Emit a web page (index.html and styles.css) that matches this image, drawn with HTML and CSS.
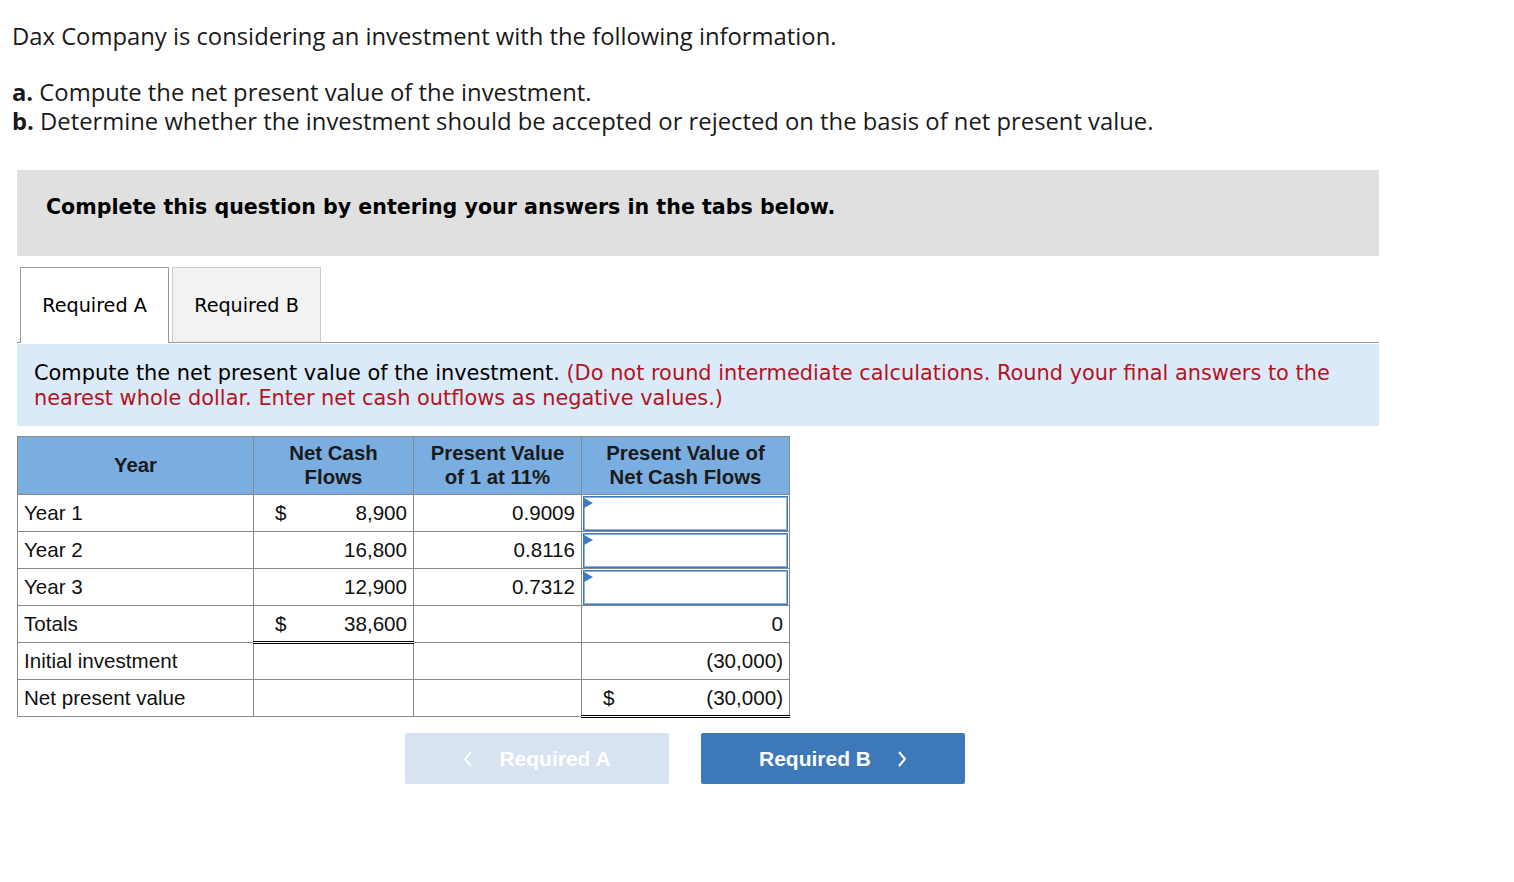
FILE: index.html
```html
<!DOCTYPE html>
<html lang="en">
<head>
<meta charset="utf-8">
<title>Dax Company NPV</title>
<link rel="stylesheet" href="styles.css">
</head>
<body>
<div class="page">
  <p class="intro">Dax Company is considering an investment with the following information.</p>
  <p class="parts"><b>a.</b> Compute the net present value of the investment.<br><b>b.</b> Determine whether the investment should be accepted or rejected on the basis of net present value.</p>

  <div class="question">
    <div class="banner">Complete this question by entering your answers in the tabs below.</div>

    <div class="tabs">
      <div class="tab tab-active">Required A</div>
      <div class="tab tab-inactive">Required B</div>
    </div>

    <div class="instructions">Compute the net present value of the investment. <span class="note">(Do not round intermediate calculations. Round your final answers to the nearest whole dollar. Enter net cash outflows as negative values.)</span></div>

    <table class="npv">
      <colgroup>
        <col class="c1"><col class="c2"><col class="c3"><col class="c4">
      </colgroup>
      <thead>
        <tr>
          <th>Year</th>
          <th>Net Cash<br>Flows</th>
          <th>Present Value<br>of 1 at 11%</th>
          <th>Present Value of<br>Net Cash Flows</th>
        </tr>
      </thead>
      <tbody>
        <tr>
          <td class="label">Year 1</td>
          <td class="num"><div class="amt"><span>$</span><span>8,900</span></div></td>
          <td class="num"><div class="amt end"><span>0.9009</span></div></td>
          <td class="inp"><div class="field"><span class="marker"></span></div></td>
        </tr>
        <tr>
          <td class="label">Year 2</td>
          <td class="num"><div class="amt end"><span>16,800</span></div></td>
          <td class="num"><div class="amt end"><span>0.8116</span></div></td>
          <td class="inp"><div class="field"><span class="marker"></span></div></td>
        </tr>
        <tr>
          <td class="label">Year 3</td>
          <td class="num"><div class="amt end"><span>12,900</span></div></td>
          <td class="num"><div class="amt end"><span>0.7312</span></div></td>
          <td class="inp"><div class="field"><span class="marker"></span></div></td>
        </tr>
        <tr class="ruled">
          <td class="label">Totals</td>
          <td class="num total"><div class="amt"><span>$</span><span>38,600</span></div></td>
          <td class="num"></td>
          <td class="num"><div class="amt end"><span>0</span></div></td>
        </tr>
        <tr class="ruled">
          <td class="label">Initial investment</td>
          <td class="num"></td>
          <td class="num"></td>
          <td class="num"><div class="amt end"><span>(30,000)</span></div></td>
        </tr>
        <tr class="ruled">
          <td class="label">Net present value</td>
          <td class="num"></td>
          <td class="num"></td>
          <td class="num total"><div class="amt"><span>$</span><span>(30,000)</span></div></td>
        </tr>
      </tbody>
    </table>

    <div class="nav">
      <button class="navbtn prev" disabled>
        <svg width="10" height="18" viewBox="0 0 10 18"><polyline points="8,2 2,9 8,16" fill="none" stroke="#ffffff" stroke-width="2"/></svg>
        <span>Required A</span>
      </button>
      <button class="navbtn next">
        <span>Required B</span>
        <svg width="10" height="18" viewBox="0 0 10 18"><polyline points="2,2 8,9 2,16" fill="none" stroke="#ffffff" stroke-width="2"/></svg>
      </button>
    </div>
  </div>
</div>
</body>
</html>
```
FILE: styles.css
```css
html, body {
  margin: 0;
  padding: 0;
  background: #ffffff;
}

.page {
  padding: 22px 0 0 12px;
  color: #1a1a1a;
}

.intro {
  margin: 0;
  font-family: "Open Sans", "Liberation Sans", sans-serif;
  font-size: 23.8px;
  line-height: 28px;
}

.parts {
  margin: 28px 0 0 0;
  font-family: "Open Sans", "Liberation Sans", sans-serif;
  font-size: 23.8px;
  line-height: 29px;
}

.parts b {
  font-weight: 700;
}

.question {
  margin: 34px 0 0 5px;
  width: 1362px;
}

.banner {
  background: #e0e0e0;
  padding: 25px 29px 37px;
  font-family: "DejaVu Sans", Verdana, sans-serif;
  font-weight: 700;
  font-size: 20.6px;
  line-height: 24px;
  color: #000;
}

.tabs {
  display: flex;
  gap: 3px;
  margin-top: 11px;
  padding-left: 3px;
  border-bottom: 1px solid #999;
  height: 75px;
}

.tab {
  box-sizing: border-box;
  width: 149px;
  display: flex;
  align-items: center;
  justify-content: center;
  font-family: "DejaVu Sans", Verdana, sans-serif;
  font-size: 19.2px;
  color: #000;
}

.tab-active {
  height: 76px;
  background: #ffffff;
  border: 1px solid #999;
  border-bottom: none;
  position: relative;
  z-index: 1;
}

.tab-inactive {
  height: 75px;
  background: #f2f2f2;
  border: 1px solid #ccc;
  border-bottom: none;
}

.instructions {
  margin-top: 1px;
  background: #dbeaf8;
  padding: 17px 17px 15px;
  font-family: "DejaVu Sans", Verdana, sans-serif;
  font-size: 20.9px;
  line-height: 25px;
  color: #000;
}

.note {
  color: #b3141e;
}

.npv {
  margin-top: 10px;
  border-collapse: collapse;
  font-family: "Liberation Sans", Arial, sans-serif;
  font-size: 20.6px;
  line-height: 22px;
  color: #111;
  table-layout: fixed;
  width: 773px;
}

.c1 { width: 236px; }
.c2 { width: 160px; }
.c3 { width: 168px; }
.c4 { width: 208px; }

.npv th {
  background: #7aaee0;
  border: 1px solid #888;
  height: 55px;
  padding: 0 0 2px;
  font-weight: 700;
  font-size: 20.4px;
  line-height: 24px;
  color: #1a1a1a;
}

.npv td {
  border: 1px solid #888;
  height: 36px;
  padding: 0;
}

.npv tr.ruled td {
  height: 35px;
}

.npv td.label {
  padding-left: 6px;
}

.amt {
  display: flex;
  justify-content: space-between;
  padding: 0 6px 0 21px;
}

.amt.end {
  justify-content: flex-end;
}

.npv td.total {
  border-top: 1px solid #000;
  border-bottom: 3px double #000;
}

.npv td.inp {
  padding: 0 1px;
  height: 36px;
}

.field {
  position: relative;
  box-sizing: border-box;
  height: 35px;
  border: 1px solid #3f77bf;
  box-shadow: inset 0 0 0 1px #8fb3e0;
  background: #ffffff;
}

.marker {
  position: absolute;
  left: 0;
  top: 1px;
  width: 0;
  height: 0;
  border-top: 5px solid transparent;
  border-bottom: 5px solid transparent;
  border-left: 9px solid #3d7bc4;
}

.nav {
  display: flex;
  gap: 32px;
  margin: 15px 0 0 388px;
}

.navbtn {
  box-sizing: border-box;
  width: 264px;
  height: 51px;
  border: none;
  border-radius: 2px;
  display: flex;
  align-items: center;
  justify-content: center;
  gap: 26px;
  font-family: "Liberation Sans", Arial, sans-serif;
  font-weight: 700;
  font-size: 21px;
  color: #ffffff;
  padding: 0;
}

.navbtn.prev {
  background: #d7e3f1;
}

.navbtn.next {
  background: #3d78b9;
}
```
